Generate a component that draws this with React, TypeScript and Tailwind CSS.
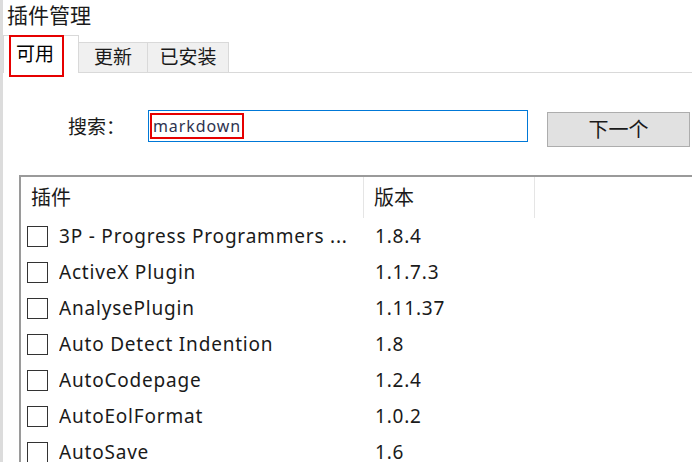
import React from "react";

const ui = "font-['Noto_Sans','Noto_Sans_CJK_SC',sans-serif]";

const plugins: { name: string; version: string }[] = [
  { name: "3P - Progress Programmers ...", version: "1.8.4" },
  { name: "ActiveX Plugin", version: "1.1.7.3" },
  { name: "AnalysePlugin", version: "1.11.37" },
  { name: "Auto Detect Indention", version: "1.8" },
  { name: "AutoCodepage", version: "1.2.4" },
  { name: "AutoEolFormat", version: "1.0.2" },
  { name: "AutoSave", version: "1.6" },
];

function Tabs() {
  return (
    <div className="flex h-[43px] shrink-0 items-end">
      <div className="relative flex h-[38px] w-[76px] items-start border-x border-t border-[#d9d9d9] bg-white pl-[12px] pt-[4px] text-[19px] leading-[28px] text-black">
        可用
        <span className="pointer-events-none absolute left-[5px] top-[-1px] h-[42px] w-[55px] border-2 border-[#e60000]" />
      </div>
      <div className="flex h-[31px] w-[69px] items-center justify-center border-b border-r border-t border-[#d9d9d9] bg-[#f0f0f0] text-[19px] text-[#1a1a1a]">
        更新
      </div>
      <div className="flex h-[31px] w-[81px] items-center justify-center border-b border-r border-t border-[#d9d9d9] bg-[#f0f0f0] text-[19px] text-[#1a1a1a]">
        已安装
      </div>
      <div className="flex-1 border-b border-[#d9d9d9]" />
    </div>
  );
}

function SearchRow() {
  return (
    <div className="mt-[37px] flex shrink-0 items-start">
      <div className="ml-[65px] w-[80px] text-[19px] leading-[34px] text-[#1a1a1a]">
        搜索：
      </div>
      <div className="flex h-[32px] w-[380px] items-center border border-[#0078d7] bg-white pl-px">
        <span className="h-[26px] border-2 border-[#e60000] px-px text-[16px] leading-[22px] tracking-[0.9px] text-[#2e3350]">
          markdown
        </span>
      </div>
      <button className="ml-[19px] mt-[2px] h-[35px] w-[143px] border border-[#adadad] bg-[#e1e1e1] text-[20px] text-[#1a1a1a]">
        下一个
      </button>
    </div>
  );
}

function Checkbox() {
  return <div className="h-[21px] w-[21px] shrink-0 border-[1.5px] border-[#333] bg-white" />;
}

function PluginList() {
  return (
    <div className="ml-[16px] mt-[28px] h-[320px] w-[700px] shrink-0 border-2 border-[#9a9a9a] bg-white">
      <div className="flex h-[41px] text-[20px] text-[#1a1a1a]">
        <div className="flex w-[343px] items-center border-r border-[#e5e5e5] pl-[10px]">插件</div>
        <div className="flex w-[171px] items-center border-r border-[#e5e5e5] pl-[10px]">版本</div>
      </div>
      {plugins.map((p) => (
        <div key={p.name} className="flex h-[36px] items-center text-[19px] tracking-[0.8px] text-[#1a1a1a]">
          <div className="flex w-[343px] min-w-0 items-center pl-[6px]">
            <Checkbox />
            <span className="ml-[11px] truncate pr-[2px]">{p.name}</span>
          </div>
          <div className="pl-[11px]">{p.version}</div>
        </div>
      ))}
    </div>
  );
}

export default function App() {
  return (
    <div className={`flex h-[462px] w-[692px] overflow-hidden bg-white ${ui}`}>
      <div className="w-[3px] shrink-0 bg-[#dcdcdc]" />
      <div className="flex min-w-0 flex-1 flex-col">
        <div className="h-[30px] shrink-0 pl-[4px] text-[21px] leading-[30px] text-[#1a1a1a]">插件管理</div>
        <Tabs />
        <SearchRow />
        <PluginList />
      </div>
    </div>
  );
}
